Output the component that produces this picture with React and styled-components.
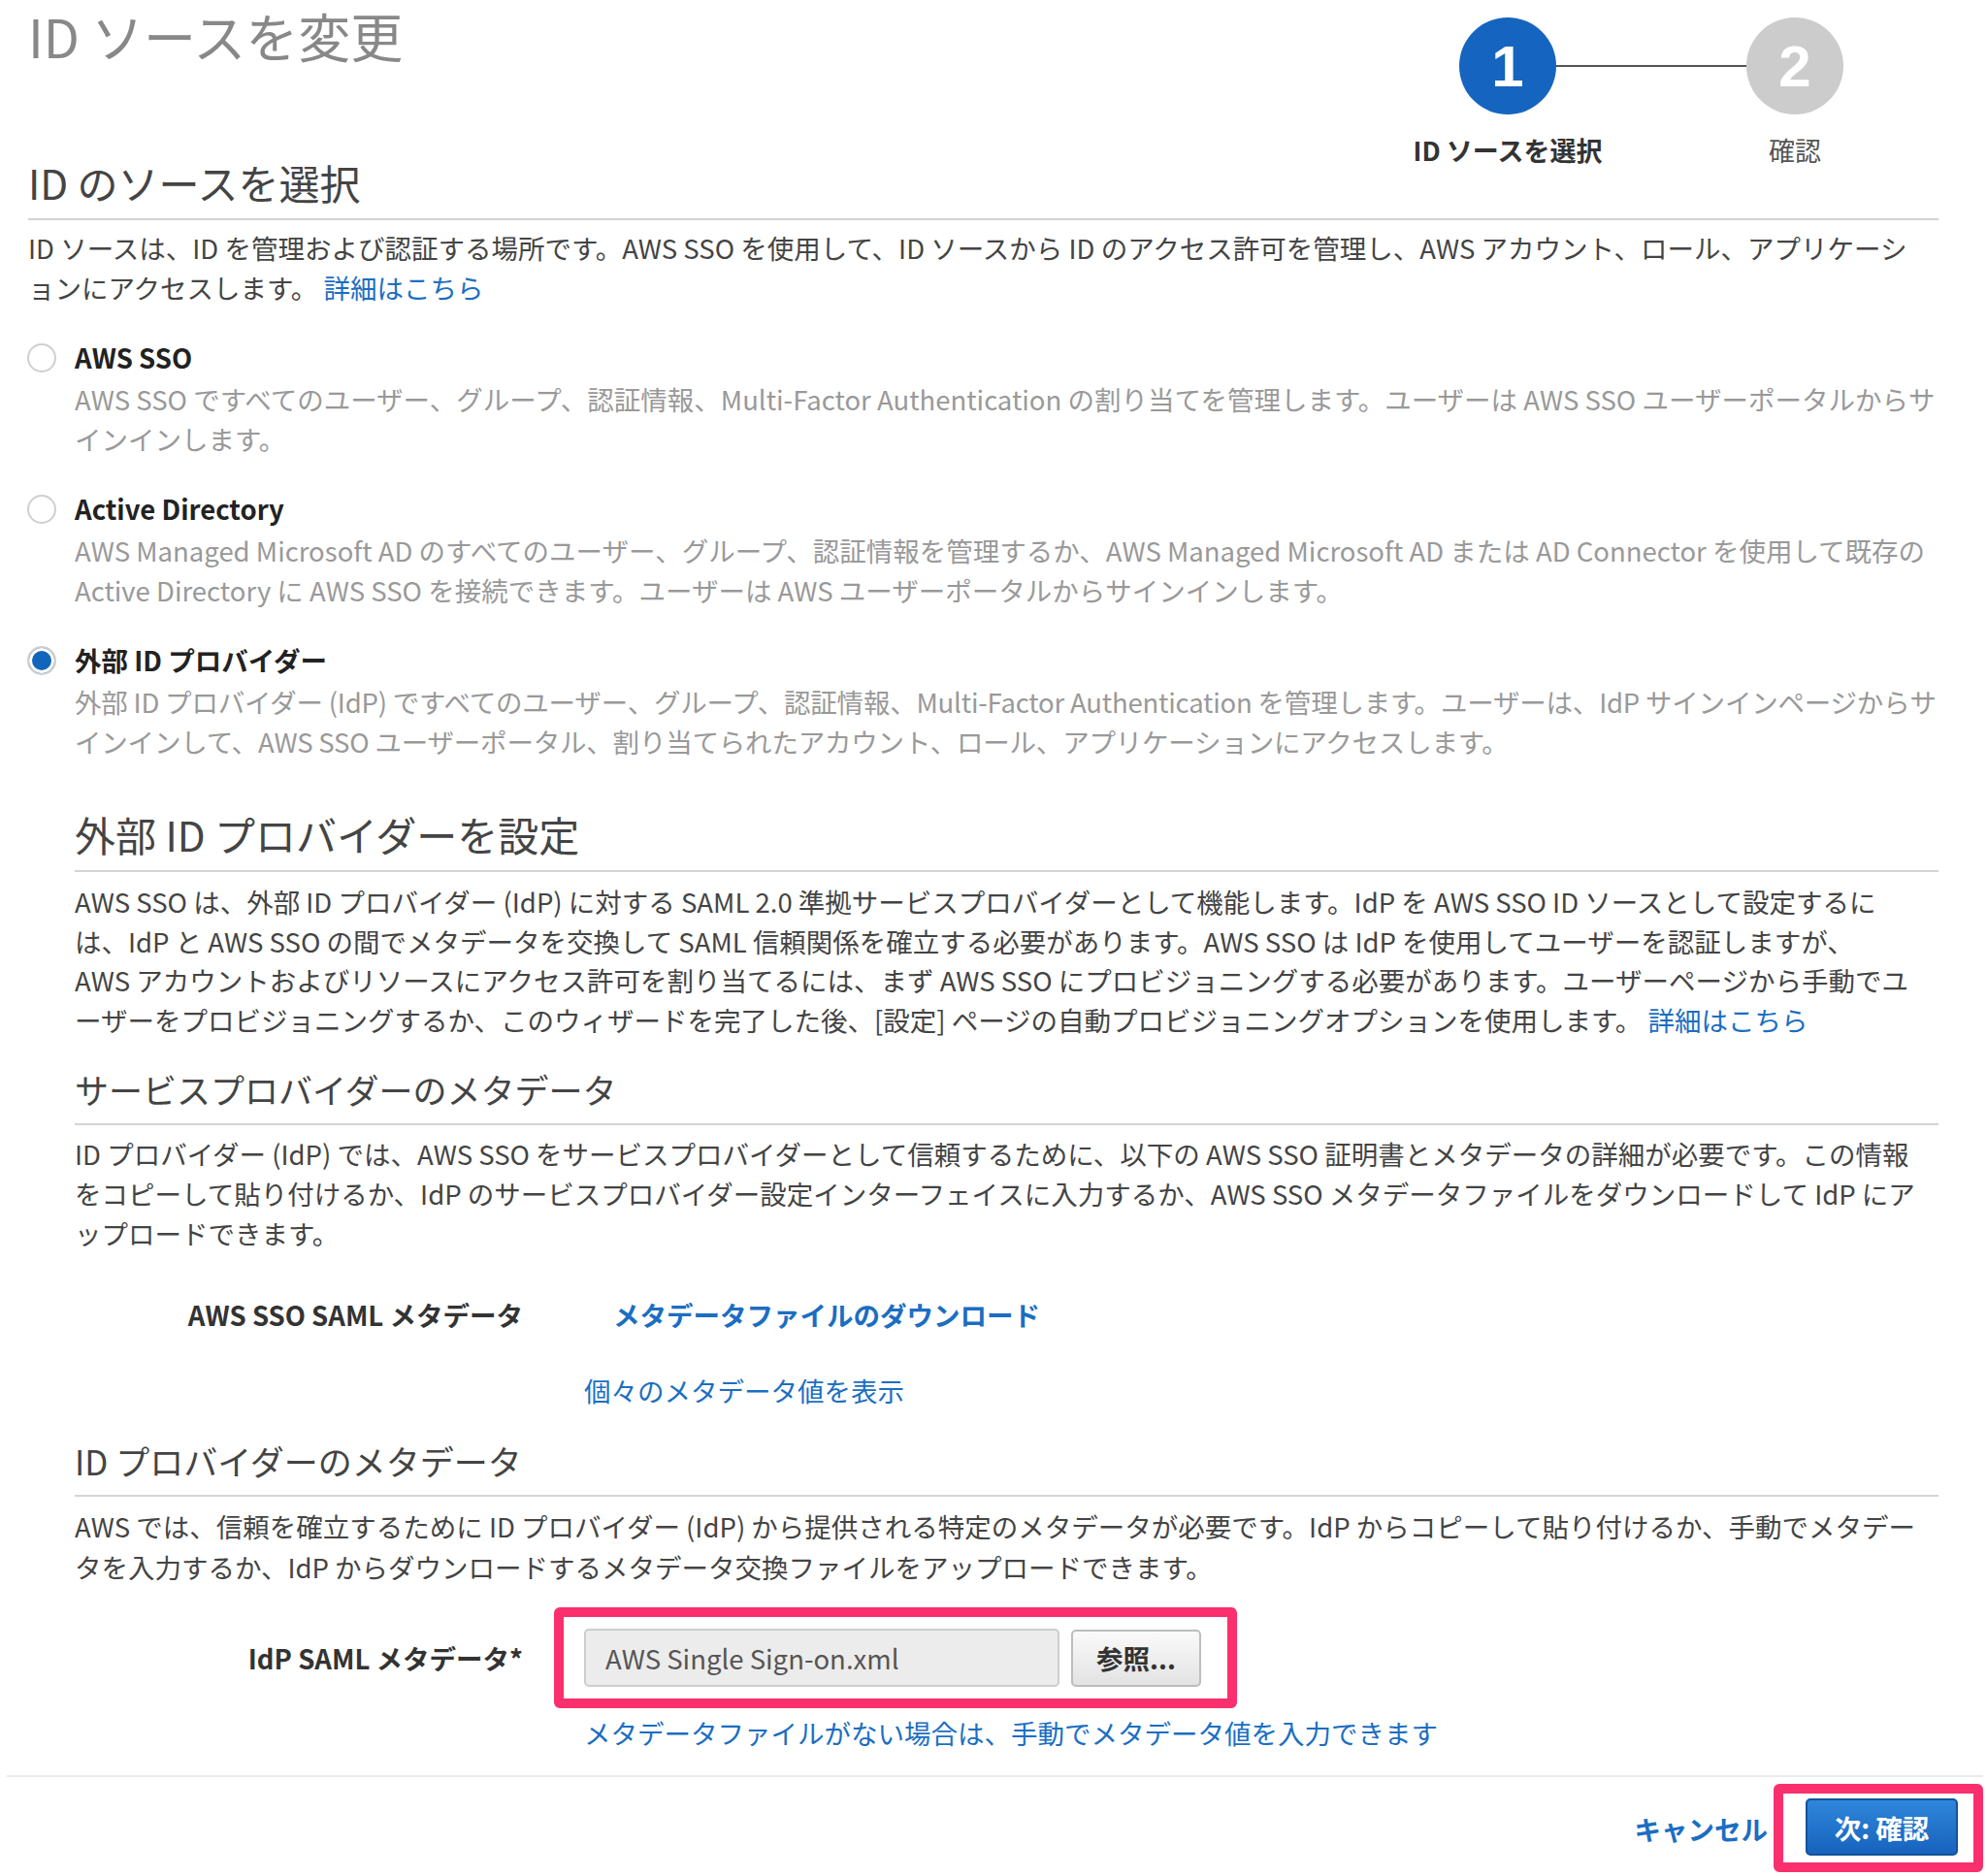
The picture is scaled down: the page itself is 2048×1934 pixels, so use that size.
import React from 'react'
import styled, { createGlobalStyle } from 'styled-components'

const GlobalStyle = createGlobalStyle`
  html, body {
    margin: 0;
    padding: 0;
    background: #fff;
  }
  body {
    font-family: "Noto Sans CJK JP", "Liberation Sans", sans-serif;
    color: #444;
  }
`;

const Page = styled.div`
  width: 2048px;
  min-height: 1934px;
  box-sizing: border-box;
  padding: 0 50px 0 29px;
  font-size: 27.5px;
`;

const Header = styled.div`
  display: flex;
  justify-content: space-between;
  align-items: flex-start;
`;

const Title = styled.h1`
  margin: 0;
  padding-top: 4px;
  font-size: 54px;
  line-height: 66px;
  font-weight: 400;
  color: #888;
`;

const Stepper = styled.div`
  display: flex;
  align-items: flex-start;
  margin: 18px 98px 0 0;
`;

const Step = styled.div`
  width: 100px;
  display: flex;
  flex-direction: column;
  align-items: center;
`;

const Circle = styled.div`
  width: 100px;
  height: 100px;
  border-radius: 50%;
  background: ${p => (p.$active ? '#1565c0' : '#cccccc')};
  color: #fff;
  display: flex;
  align-items: center;
  justify-content: center;
  font-family: "Liberation Sans", sans-serif;
  font-weight: 700;
  font-size: 60px;
`;

const StepLabel = styled.div`
  margin: 23px -100px 0;
  width: 300px;
  text-align: center;
  font-size: 27px;
  line-height: 28px;
  font-weight: ${p => (p.$active ? 700 : 400)};
  color: ${p => (p.$active ? '#333' : '#555')};
`;

const Connector = styled.div`
  width: 196px;
  height: 2px;
  margin-top: 49px;
  background: #555;
`;

const SectionTitle = styled.h2`
  margin: ${p => p.$top || 0}px 0 0;
  font-size: 42px;
  line-height: 40px;
  font-weight: 400;
  color: #444;
  padding-bottom: 17px;
  border-bottom: 2px solid #d4d4d4;
`;

const SubTitle = styled.h3`
  margin: ${p => p.$top || 0}px 0 0;
  font-size: 35px;
  line-height: 40px;
  font-weight: 400;
  color: #444;
  padding-bottom: 15px;
  border-bottom: 2px solid #d4d4d4;
`;

const Para = styled.p`
  margin: ${p => p.$top || 9}px 0 0;
  line-height: ${p => p.$lh || 41}px;
  color: #444;
  white-space: nowrap;
`;

const Link = styled.a`
  color: #1b6ec2;
  text-decoration: none;
  font-weight: ${p => (p.$bold ? 700 : 400)};
  cursor: pointer;
`;

const Options = styled.div`
  display: flex;
  flex-direction: column;
  gap: 32px;
  margin-top: 31px;
`;

const Option = styled.div`
  display: grid;
  grid-template-columns: 48px 1fr;
`;

const Radio = styled.div`
  width: 30px;
  height: 30px;
  box-sizing: border-box;
  margin: 6px 0 0 -1px;
  border-radius: 50%;
  border: 2px solid #cfcfcf;
  background: ${p => (p.$checked ? '#1166bb' : '#fff')};
  box-shadow: ${p => (p.$checked ? 'inset 0 0 0 3px #fff' : 'none')};
`;

const OptionLabel = styled.div`
  font-weight: 700;
  color: #222;
  line-height: 41px;
`;

const OptionDesc = styled.div`
  grid-column: 2;
  margin-top: 2px;
  line-height: 40.5px;
  color: #999;
  white-space: nowrap;
  letter-spacing: ${p => (p.$tight ? '-0.2px' : 'normal')};
`;

const Indented = styled.div`
  margin-left: 48px;
`;

const FormRow = styled.div`
  display: flex;
  align-items: center;
  margin-top: ${p => p.$top || 0}px;
  line-height: 41px;
`;

const FieldLabel = styled.div`
  width: 462px;
  flex: none;
  text-align: right;
  font-weight: 700;
  color: #333;
`;

const FieldValue = styled.div`
  margin-left: ${p => p.$offset ?? 63}px;
`;

const Highlight = styled.div`
  display: flex;
  align-items: center;
  gap: 12px;
  border: 10px solid #fa2f6e;
  border-radius: 6px;
  padding: ${p => p.$pad};
`;

const FileInput = styled.div`
  width: 490px;
  height: 60px;
  box-sizing: border-box;
  padding: 0 20px;
  display: flex;
  align-items: center;
  background: #ececec;
  border: 2px solid #cdcdcd;
  border-radius: 5px;
  color: #555;
`;

const BrowseButton = styled.button`
  width: 134px;
  height: 59px;
  font: inherit;
  font-weight: 700;
  color: #333;
  background: linear-gradient(#fafafa, #e3e3e3);
  border: 2px solid #bdbdbd;
  border-radius: 5px;
`;

const Footer = styled.div`
  display: flex;
  justify-content: flex-end;
  align-items: center;
  gap: 6px;
  margin: 23px -46px 0 -22px;
  padding-top: 7px;
  border-top: 2px solid #ececec;
`;

const PrimaryButton = styled.button`
  width: 157px;
  height: 59px;
  font: inherit;
  font-weight: 700;
  color: #fff;
  background: linear-gradient(#2f86da, #1763bd);
  border: 2px solid #12539b;
  border-radius: 5px;
`;

const lines = arr => arr.map((t, i) => (
  <React.Fragment key={i}>{t}{i < arr.length - 1 && <br />}</React.Fragment>
));

const options = [
  {
    label: 'AWS SSO',
    desc: [
      'AWS SSO ですべてのユーザー、グループ、認証情報、Multi-Factor Authentication の割り当てを管理します。ユーザーは AWS SSO ユーザーポータルからサ',
      'インインします。',
    ],
  },
  {
    label: 'Active Directory',
    desc: [
      'AWS Managed Microsoft AD のすべてのユーザー、グループ、認証情報を管理するか、AWS Managed Microsoft AD または AD Connector を使用して既存の',
      'Active Directory に AWS SSO を接続できます。ユーザーは AWS ユーザーポータルからサインインします。',
    ],
  },
  {
    label: '外部 ID プロバイダー',
    checked: true,
    tight: true,
    desc: [
      '外部 ID プロバイダー (IdP) ですべてのユーザー、グループ、認証情報、Multi-Factor Authentication を管理します。ユーザーは、IdP サインインページからサ',
      'インインして、AWS SSO ユーザーポータル、割り当てられたアカウント、ロール、アプリケーションにアクセスします。',
    ],
  },
];

const App = () => {
  return (
    <Page>
      <GlobalStyle />
      <Header>
        <Title>ID ソースを変更</Title>
        <Stepper>
          <Step>
            <Circle $active>1</Circle>
            <StepLabel $active>ID ソースを選択</StepLabel>
          </Step>
          <Connector />
          <Step>
            <Circle>2</Circle>
            <StepLabel>確認</StepLabel>
          </Step>
        </Stepper>
      </Header>

      <SectionTitle $top={-1}>ID のソースを選択</SectionTitle>
      <Para $top={8}>
        ID ソースは、ID を管理および認証する場所です。AWS SSO を使用して、ID ソースから ID のアクセス許可を管理し、AWS アカウント、ロール、アプリケーシ
        <br />
        ョンにアクセスします。 <Link>詳細はこちら</Link>
      </Para>

      <Options>
        {options.map(o => (
          <Option key={o.label}>
            <Radio $checked={o.checked} />
            <OptionLabel>{o.label}</OptionLabel>
            <OptionDesc $tight={o.tight}>{lines(o.desc)}</OptionDesc>
          </Option>
        ))}
      </Options>

      <Indented>
        <SectionTitle $top={56}>外部 ID プロバイダーを設定</SectionTitle>
        <Para $top={10} $lh={40.5}>
          AWS SSO は、外部 ID プロバイダー (IdP) に対する SAML 2.0 準拠サービスプロバイダーとして機能します。IdP を AWS SSO ID ソースとして設定するに
          <br />
          は、IdP と AWS SSO の間でメタデータを交換して SAML 信頼関係を確立する必要があります。AWS SSO は IdP を使用してユーザーを認証しますが、
          <br />
          AWS アカウントおよびリソースにアクセス許可を割り当てるには、まず AWS SSO にプロビジョニングする必要があります。ユーザーページから手動でユ
          <br />
          ーザーをプロビジョニングするか、このウィザードを完了した後、[設定] ページの自動プロビジョニングオプションを使用します。 <Link>詳細はこちら</Link>
        </Para>

        <SubTitle $top={32}>サービスプロバイダーのメタデータ</SubTitle>
        <Para $top={9} $lh={41}>
          ID プロバイダー (IdP) では、AWS SSO をサービスプロバイダーとして信頼するために、以下の AWS SSO 証明書とメタデータの詳細が必要です。この情報
          <br />
          をコピーして貼り付けるか、IdP のサービスプロバイダー設定インターフェイスに入力するか、AWS SSO メタデータファイルをダウンロードして IdP にア
          <br />
          ップロードできます。
        </Para>

        <FormRow $top={43}>
          <FieldLabel>AWS SSO SAML メタデータ</FieldLabel>
          <FieldValue $offset={93}>
            <Link $bold>メタデータファイルのダウンロード</Link>
          </FieldValue>
        </FormRow>
        <FormRow $top={37}>
          <FieldValue $offset={525}>
            <Link>個々のメタデータ値を表示</Link>
          </FieldValue>
        </FormRow>

        <SubTitle $top={32}>ID プロバイダーのメタデータ</SubTitle>
        <Para $top={9} $lh={42}>
          AWS では、信頼を確立するために ID プロバイダー (IdP) から提供される特定のメタデータが必要です。IdP からコピーして貼り付けるか、手動でメタデー
          <br />
          タを入力するか、IdP からダウンロードするメタデータ交換ファイルをアップロードできます。
        </Para>

        <FormRow $top={21}>
          <FieldLabel>IdP SAML メタデータ*</FieldLabel>
          <FieldValue $offset={32}>
            <Highlight $pad="12px 27px 12px 21px">
              <FileInput>AWS Single Sign-on.xml</FileInput>
              <BrowseButton>参照...</BrowseButton>
            </Highlight>
          </FieldValue>
        </FormRow>
        <FormRow $top={5}>
          <FieldValue $offset={525}>
            <Link>メタデータファイルがない場合は、手動でメタデータ値を入力できます</Link>
          </FieldValue>
        </FormRow>
      </Indented>

      <Footer>
        <Link $bold>キャンセル</Link>
        <Highlight $pad="5px 16px 7px 23px">
          <PrimaryButton>次: 確認</PrimaryButton>
        </Highlight>
      </Footer>
    </Page>
  )
}

export default App
